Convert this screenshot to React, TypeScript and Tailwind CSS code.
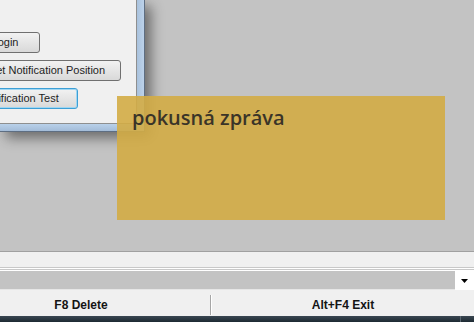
import React from 'react';

const font = { fontFamily: '"DejaVu Sans", "Liberation Sans", sans-serif' };

const WinButton: React.FC<{ label: string; box: string; focused?: boolean }> = ({ label, box, focused }) => (
  <div
    className={`h-[21px] ${box} shrink-0 flex items-center justify-center rounded-[3px] border bg-gradient-to-b from-[#f2f2f2] to-[#d9d9d9] text-[11px] text-[#1e1e1e] ${focused ? 'border-[#3c9fd6] shadow-[inset_0_0_0_1px_#9fd6f2]' : 'border-[#707070]'}`}
    style={{ fontFamily: '"Liberation Sans", Arial, sans-serif' }}
  >
    <span className="whitespace-nowrap">{label}</span>
  </div>
);

export default function App() {
  return (
    <div className="w-[474px] h-[322px] overflow-hidden bg-[#c3c3c3] flex flex-col" style={font}>
      {/* desktop area */}
      <div className="relative h-[251px] shrink-0">
        {/* dialog window, cut off at top-left */}
        <div className="absolute left-0 top-0 w-[145px] h-[132px] flex shadow-[6px_6px_12px_rgba(0,0,0,0.45)]">
          <div className="flex-1 flex flex-col">
            <div className="flex-1 bg-[#f0f0f0] border-r border-b border-[#8e8f8f] flex flex-col gap-[7px] pt-[32px] overflow-hidden">
              <WinButton label="Login" box="w-[70px] -ml-[30px]" />
              <WinButton label="Set Notification Position" box="w-[148px] -ml-[27px]" />
              <WinButton label="Notification Test" box="w-[116px] -ml-[38px]" focused />
            </div>
            <div className="h-[8px] bg-gradient-to-b from-[#b9d1ea] to-[#a3bcd8] border-b border-[#5e6e82]" />
          </div>
          <div className="w-[8px] bg-gradient-to-r from-[#a9c2dd] to-[#bcd2ea] border-r border-[#5e6e82] border-b" />
        </div>

        {/* notification popup */}
        <div className="absolute left-[117px] top-[96px] w-[328px] h-[124px] bg-[#d3ac45]/90 pl-[15px] pt-[7px]">
          <span
            className="text-[20px] font-semibold text-[#3a3428]"
            style={{ fontFamily: '"Open Sans", "Noto Sans", sans-serif' }}
          >
            pokusná zpráva
          </span>
        </div>
      </div>

      {/* textbox strip */}
      <div className="h-[16px] shrink-0 bg-[#f0f0f0] border-t border-[#a0a0a0]" />
      <div className="h-[1px] shrink-0 bg-[#c8c8c8]" />
      <div className="h-[1px] shrink-0 bg-white" />
      <div className="h-[1px] shrink-0 bg-[#c8c8c8]" />
      <div className="h-[1px] shrink-0 bg-white" />

      {/* combo row */}
      <div className="h-[19px] shrink-0 flex bg-white">
        <div className="w-[455px] bg-[#c3c3c3] border-b border-[#e6e6e6]" />
        <div className="flex-1 flex items-center justify-center">
          <svg width="7" height="4" viewBox="0 0 7 4">
            <path d="M0 0h7L3.5 4z" fill="#000" />
          </svg>
        </div>
      </div>

      {/* status bar */}
      <div
        className="h-[26px] shrink-0 flex items-center pt-[3px] bg-[#f0f0f0] text-[12px] font-bold text-[#141414]"
        style={{ fontFamily: '"Liberation Sans", Arial, sans-serif' }}
      >
        <div className="w-[258px] -ml-[48px] shrink-0 text-center">F8 Delete</div>
        <div className="w-[2px] h-[20px] bg-[#a6a6a6] border-r border-white" />
        <div className="flex-1 text-center">Alt+F4 Exit</div>
      </div>

      {/* taskbar edge */}
      <div className="flex-1 flex bg-gradient-to-b from-[#3a4752] to-[#1d2a33]">
        <div className="flex-1" />
        <div className="w-[14px] border-l border-[#5a6670]" />
      </div>
    </div>
  );
}
